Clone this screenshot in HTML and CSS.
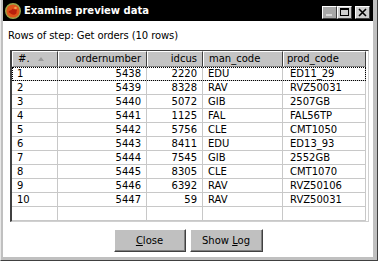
FILE: index.html
```html
<!DOCTYPE html>
<html>
<head>
<meta charset="UTF-8">
<title>Examine preview data</title>
<link rel="stylesheet" href="styles.css">
</head>
<body>
	<div class="window">
		<div class="titlebar">
			<svg class="app-icon" width="16" height="16" viewBox="0 0 16 16">
				<circle cx="8" cy="8" r="7.3" fill="#e0541a" stroke="#9aa64a" stroke-width="1.4"/>
				<path d="M3.5 9 C5 6.5 6.5 8 7.5 5.5 C8.5 7 10.5 5.5 12 7 C11 9 12.5 10.5 10 11.5 C8 12.5 6 11 3.5 9 Z" fill="#b8200c"/>
				<circle cx="10.5" cy="5" r="1.3" fill="#f5a050"/>
			</svg>
			<span class="title">Examine preview data</span>
			<div class="controls">
				<span class="ctl ctl-min"><svg width="13" height="11" viewBox="0 0 13 11"><rect x="3" y="7" width="6" height="2" fill="#d8d8d8"/></svg></span>
				<span class="ctl ctl-max"><svg width="13" height="11" viewBox="0 0 13 11"><rect x="2.5" y="1.5" width="8" height="7" fill="none" stroke="#000"/><rect x="2" y="1" width="9" height="2" fill="#000"/></svg></span>
				<span class="ctl ctl-close"><svg width="13" height="11" viewBox="0 0 13 11"><path d="M3 2 L10 9 M10 2 L3 9" stroke="#000" stroke-width="1.6"/></svg></span>
			</div>
		</div>
		<div class="content">
			<div class="caption">Rows of step: Get orders (10 rows)</div>
			<div class="grid-frame">
				<table class="grid">
					<thead>
						<tr>
							<th class="c-idx">#.<span class="sort"></span></th>
							<th class="c-order num">ordernumber</th>
							<th class="c-cus num">idcus</th>
							<th class="c-man">man_code</th>
							<th class="c-prod">prod_code</th>
						</tr>
					</thead>
					<tbody>
						<tr class="focus"><td>1</td><td class="num">5438</td><td class="num">2220</td><td>EDU</td><td>ED11_29</td></tr>
						<tr><td>2</td><td class="num">5439</td><td class="num">8328</td><td>RAV</td><td>RVZ50031</td></tr>
						<tr><td>3</td><td class="num">5440</td><td class="num">5072</td><td>GIB</td><td>2507GB</td></tr>
						<tr><td>4</td><td class="num">5441</td><td class="num">1125</td><td>FAL</td><td>FAL56TP</td></tr>
						<tr><td>5</td><td class="num">5442</td><td class="num">5756</td><td>CLE</td><td>CMT1050</td></tr>
						<tr><td>6</td><td class="num">5443</td><td class="num">8411</td><td>EDU</td><td>ED13_93</td></tr>
						<tr><td>7</td><td class="num">5444</td><td class="num">7545</td><td>GIB</td><td>2552GB</td></tr>
						<tr><td>8</td><td class="num">5445</td><td class="num">8305</td><td>CLE</td><td>CMT1070</td></tr>
						<tr><td>9</td><td class="num">5446</td><td class="num">6392</td><td>RAV</td><td>RVZ50106</td></tr>
						<tr><td>10</td><td class="num">5447</td><td class="num">59</td><td>RAV</td><td>RVZ50031</td></tr>
						<tr><td></td><td></td><td></td><td></td><td></td></tr>
					</tbody>
				</table>
			</div>
			<div class="buttons">
				<button class="btn"><u>C</u>lose</button>
				<button class="btn">Show <u>L</u>og</button>
			</div>
		</div>
	</div>
</body>
</html>
```

FILE: styles.css
```css
body{
	margin: 0;
	font-family: "DejaVu Sans", Verdana, sans-serif;
	font-size: 10px;
	color: #000;
}

/* 窗口外框 */
.window{
	width: 378px;
	height: 261px;
	box-sizing: border-box;
	background: #c0c0c0;
	border-left: 1px solid #e8e8e8;
	border-right: 1px solid #404040;
	border-bottom: 1px solid #404040;
	padding: 0 4px 3px 2px;
	display: flex;
	flex-direction: column;
}

/* 标题栏 */
.titlebar{
	height: 21px;
	background: #000;
	display: flex;
	align-items: center;
	padding: 0 3px 0 2px;
	flex-shrink: 0;
}
.app-icon{
	display: block;
	margin-right: 3px;
}
.title{
	color: #fff;
	font-weight: bold;
	font-size: 10px;
}
.controls{
	margin-left: auto;
	display: flex;
	align-self: flex-start;
	margin-top: 6px;
}
.ctl{
	width: 15px;
	height: 13px;
	box-sizing: border-box;
	background: #cfcfcf;
	border-top: 1px solid #fff;
	border-left: 1px solid #fff;
	border-right: 1px solid #404040;
	border-bottom: 1px solid #404040;
	display: flex;
	align-items: center;
	justify-content: center;
}
.ctl svg{
	display: block;
}
.ctl-min{
	background: #a8a8a8;
}
.ctl-close{
	margin-left: 3px;
}

/* 内容区 */
.content{
	flex: 1;
	background: #fff;
	padding: 9px 4px 5px 7px;
	display: flex;
	flex-direction: column;
}
.caption{
	height: 12px;
	line-height: 12px;
	margin-left: -2px;
	white-space: nowrap;
	letter-spacing: -0.1px;
}

/* 表格 */
.grid-frame{
	margin-top: 8px;
	height: 172px;
	box-sizing: border-box;
	border-top: 1px solid #404040;
	border-left: 2px solid #404040;
	border-right: 1px solid #d0d0d0;
	border-bottom: 1px solid #d0d0d0;
	background: #fff;
	overflow: hidden;
}
.grid{
	border-collapse: separate;
	border-spacing: 0;
	table-layout: fixed;
	width: 354px;
}
.grid th,.grid td{
	box-sizing: border-box;
	padding: 0 5px;
	white-space: nowrap;
	overflow: hidden;
	text-align: left;
	font-weight: normal;
}
.grid th{
	height: 16px;
	line-height: 14px;
	background: #c4c4c4;
	border-top: 1px solid #fff;
	border-left: 1px solid #fff;
	border-right: 1px solid #404040;
	border-bottom: 1px solid #808080;
}
.grid td{
	height: 14px;
	line-height: 13px;
	border-right: 1px solid #c8c8c8;
	border-bottom: 1px solid #c8c8c8;
}
.grid .num{
	text-align: right;
}
.c-idx{ width: 46px; }
.c-order{ width: 89px; }
.c-cus{ width: 56px; }
.c-man{ width: 80px; }
.c-prod{ width: 83px; padding-left: 3px !important; }
.grid td:last-child{
	padding-left: 7px;
}

/* 排序箭头 */
.sort{
	display: inline-block;
	width: 0;
	height: 0;
	border-left: 3px solid transparent;
	border-right: 3px solid transparent;
	border-bottom: 4px solid #9a9a9a;
	margin-left: 8px;
	vertical-align: 1px;
}

.grid tr.focus{
	outline: 1px dotted #000;
	outline-offset: -1px;
}

/* 按钮 */
.buttons{
	margin-top: 7px;
	display: flex;
	justify-content: center;
	gap: 4px;
	margin-left: -3px;
}
.btn{
	height: 23px;
	width: 72px;
	box-sizing: border-box;
	font-family: "DejaVu Sans", Verdana, sans-serif;
	font-size: 10px;
	color: #000;
	background: #c0c0c0;
	border-top: 1px solid #fff;
	border-left: 1px solid #fff;
	border-right: 1px solid #404040;
	border-bottom: 1px solid #404040;
	box-shadow: inset -1px -1px #808080;
	padding: 0;
}
.btn + .btn{
	width: 73px;
}
```
